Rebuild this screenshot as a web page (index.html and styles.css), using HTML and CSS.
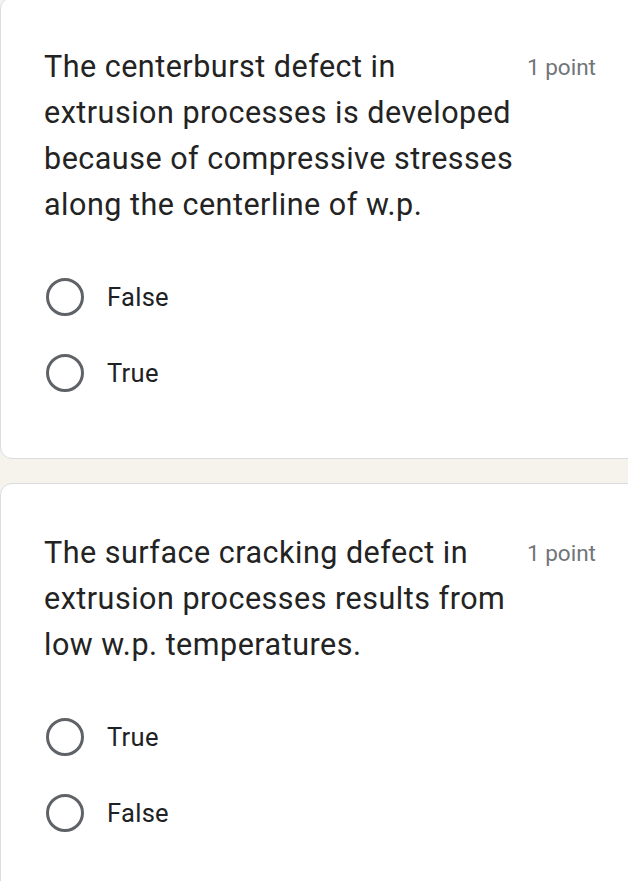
FILE: index.html
```html
<!DOCTYPE html>
<html>
<head>
<meta charset="utf-8">
<link rel="stylesheet" href="styles.css">
</head>
<body>
<div class="card first">
  <div class="head">
    <div class="title">The centerburst defect in extrusion processes is developed because of compressive stresses along the centerline of w.p.</div>
    <div class="points">1 point</div>
  </div>
  <div class="options">
    <label class="opt"><span class="radio"></span><span class="lbl">False</span></label>
    <label class="opt"><span class="radio"></span><span class="lbl">True</span></label>
  </div>
</div>
<div class="card">
  <div class="head">
    <div class="title">The surface cracking defect in extrusion processes results from low w.p. temperatures.</div>
    <div class="points">1 point</div>
  </div>
  <div class="options">
    <label class="opt"><span class="radio"></span><span class="lbl">True</span></label>
    <label class="opt"><span class="radio"></span><span class="lbl">False</span></label>
  </div>
</div>
</body>
</html>
```
FILE: styles.css
```css
html, body {
  margin: 0;
  padding: 0;
}
body {
  background: #f5f3eb;
  font-family: Roboto, "Liberation Sans", sans-serif;
  color: #202124;
  overflow: hidden;
}
.card {
  background: #fff;
  border: 1px solid #dadce0;
  border-radius: 12px;
  margin-right: -30px;
  padding: 46px 0 47px 43px;
}
.card + .card {
  margin-top: 24px;
}
.first {
  margin-top: -3px;
}
.head {
  display: flex;
  align-items: flex-start;
}
.title {
  width: 476px;
  font-size: 30.5px;
  line-height: 46px;
  letter-spacing: 0.5px;
  color: #232323;
}
.points {
  margin-left: 7px;
  font-size: 22.5px;
  line-height: 46px;
  color: #70757a;
}
.options {
  margin-top: 31px;
}
.opt {
  display: flex;
  align-items: center;
  height: 76px;
}
.radio {
  box-sizing: border-box;
  width: 38px;
  height: 38px;
  border: 3px solid #5f6368;
  border-radius: 50%;
  margin-left: 2px;
}
.lbl {
  margin-left: 23px;
  font-size: 25.5px;
  letter-spacing: 0.3px;
}
```
